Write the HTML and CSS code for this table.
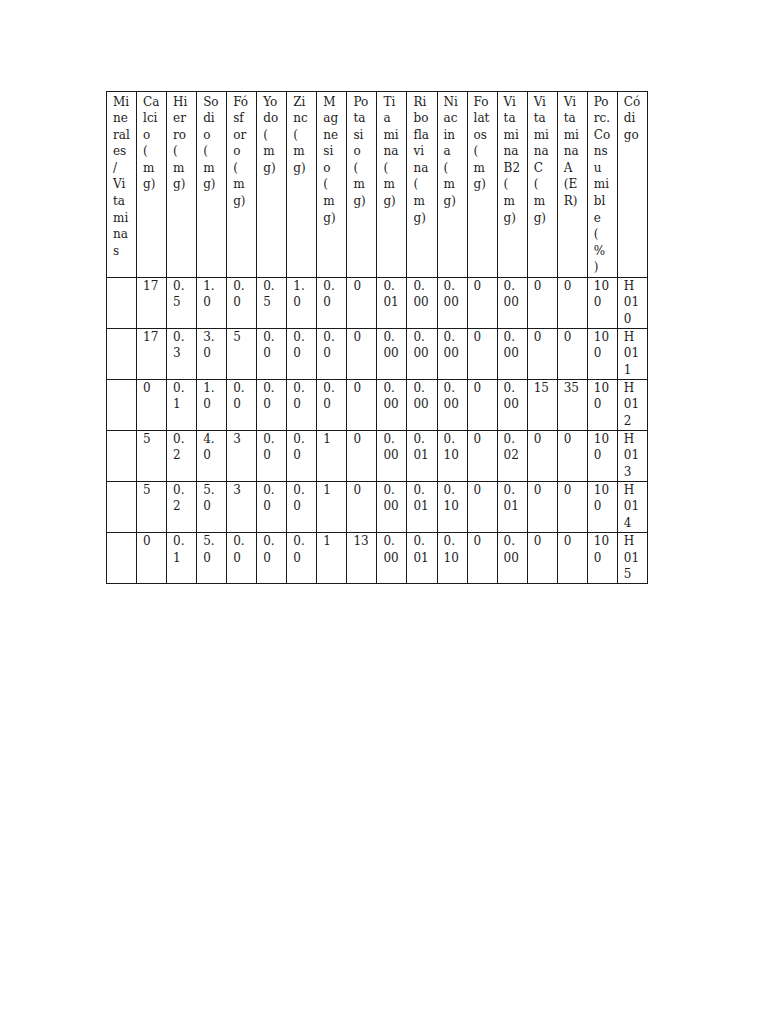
FILE: index.html
```html
<!DOCTYPE html>
<html lang="es">
<head>
<meta charset="utf-8">
<title>Minerales / Vitaminas</title>
<link rel="stylesheet" href="styles.css">
</head>
<body>
<main class="page">
<table class="nutri">
<thead>
<tr>
<th>Mi<br>ne<br>ral<br>es<br>/<br>Vi<br>ta<br>mi<br>na<br>s</th>
<th>Ca<br>lci<br>o<br>(<br>m<br>g)</th>
<th>Hi<br>er<br>ro<br>(<br>m<br>g)</th>
<th>So<br>di<br>o<br>(<br>m<br>g)</th>
<th>Fó<br>sf<br>or<br>o<br>(<br>m<br>g)</th>
<th>Yo<br>do<br>(<br>m<br>g)</th>
<th>Zi<br>nc<br>(<br>m<br>g)</th>
<th>M<br>ag<br>ne<br>si<br>o<br>(<br>m<br>g)</th>
<th>Po<br>ta<br>si<br>o<br>(<br>m<br>g)</th>
<th>Ti<br>a<br>mi<br>na<br>(<br>m<br>g)</th>
<th>Ri<br>bo<br>fla<br>vi<br>na<br>(<br>m<br>g)</th>
<th>Ni<br>ac<br>in<br>a<br>(<br>m<br>g)</th>
<th>Fo<br>lat<br>os<br>(<br>m<br>g)</th>
<th>Vi<br>ta<br>mi<br>na<br>B2<br>(<br>m<br>g)</th>
<th>Vi<br>ta<br>mi<br>na<br>C<br>(<br>m<br>g)</th>
<th>Vi<br>ta<br>mi<br>na<br>A<br>(E<br>R)</th>
<th>Po<br>rc.<br>Co<br>ns<br>u<br>mi<br>bl<br>e<br>(<br>%<br>)</th>
<th>Có<br>di<br>go</th>
</tr>
</thead>
<tbody>
<tr>
<td></td><td>17</td><td>0.<br>5</td><td>1.<br>0</td><td>0.<br>0</td><td>0.<br>5</td><td>1.<br>0</td><td>0.<br>0</td><td>0</td><td>0.<br>01</td><td>0.<br>00</td><td>0.<br>00</td><td>0</td><td>0.<br>00</td><td>0</td><td>0</td><td>10<br>0</td><td>H<br>01<br>0</td>
</tr>
<tr>
<td></td><td>17</td><td>0.<br>3</td><td>3.<br>0</td><td>5</td><td>0.<br>0</td><td>0.<br>0</td><td>0.<br>0</td><td>0</td><td>0.<br>00</td><td>0.<br>00</td><td>0.<br>00</td><td>0</td><td>0.<br>00</td><td>0</td><td>0</td><td>10<br>0</td><td>H<br>01<br>1</td>
</tr>
<tr>
<td></td><td>0</td><td>0.<br>1</td><td>1.<br>0</td><td>0.<br>0</td><td>0.<br>0</td><td>0.<br>0</td><td>0.<br>0</td><td>0</td><td>0.<br>00</td><td>0.<br>00</td><td>0.<br>00</td><td>0</td><td>0.<br>00</td><td>15</td><td>35</td><td>10<br>0</td><td>H<br>01<br>2</td>
</tr>
<tr>
<td></td><td>5</td><td>0.<br>2</td><td>4.<br>0</td><td>3</td><td>0.<br>0</td><td>0.<br>0</td><td>1</td><td>0</td><td>0.<br>00</td><td>0.<br>01</td><td>0.<br>10</td><td>0</td><td>0.<br>02</td><td>0</td><td>0</td><td>10<br>0</td><td>H<br>01<br>3</td>
</tr>
<tr>
<td></td><td>5</td><td>0.<br>2</td><td>5.<br>0</td><td>3</td><td>0.<br>0</td><td>0.<br>0</td><td>1</td><td>0</td><td>0.<br>00</td><td>0.<br>01</td><td>0.<br>10</td><td>0</td><td>0.<br>01</td><td>0</td><td>0</td><td>10<br>0</td><td>H<br>01<br>4</td>
</tr>
<tr>
<td></td><td>0</td><td>0.<br>1</td><td>5.<br>0</td><td>0.<br>0</td><td>0.<br>0</td><td>0.<br>0</td><td>1</td><td>13</td><td>0.<br>00</td><td>0.<br>01</td><td>0.<br>10</td><td>0</td><td>0.<br>00</td><td>0</td><td>0</td><td>10<br>0</td><td>H<br>01<br>5</td>
</tr>
</tbody>
</table>
</main>
</body>
</html>
```
FILE: styles.css
```css
html, body {
  margin: 0;
  padding: 0;
  background: #ffffff;
}

.page {
  padding: 91px 0 0 106px;
}

.nutri {
  border-collapse: collapse;
  table-layout: fixed;
  width: 542px;
  font-family: "DejaVu Serif", "Liberation Serif", serif;
  font-size: 12px;
  line-height: 16.6px;
  color: #1c1c1c;
}

.nutri th,
.nutri td {
  border: 1px solid #1a1a1a;
  padding: 0 2px 0.3px 6px;
  text-align: left;
  vertical-align: top;
  font-weight: normal;
  white-space: nowrap;
  overflow: visible;
}

.nutri thead th {
  padding-top: 1.5px;
  padding-bottom: 0.5px;
}
```
